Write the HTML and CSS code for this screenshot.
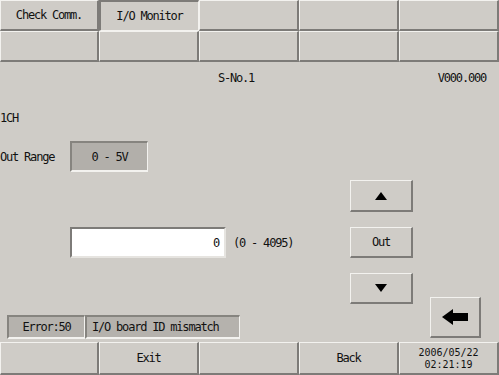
FILE: index.html
```html
<!DOCTYPE html>
<html>
<head>
<meta charset="utf-8">
<link rel="stylesheet" href="styles.css">
</head>
<body>
<div class="screen">
  <div class="nav">
    <div class="btn">Check Comm.</div>
    <div class="btn sel">I/O Monitor</div>
    <div class="btn"></div>
    <div class="btn"></div>
    <div class="btn"></div>
    <div class="btn"></div>
    <div class="btn"></div>
    <div class="btn"></div>
    <div class="btn"></div>
    <div class="btn"></div>
  </div>
  <div class="main">
    <div class="hdr">
      <span class="sno">S-No.1</span>
      <span class="ver">V000.000</span>
    </div>
    <div class="ch">1CH</div>
    <div class="range">
      <span class="lbl">Out Range</span>
      <span class="rbox">0 - 5V</span>
    </div>
    <div class="lower">
      <div class="btn up"><svg width="12" height="8" viewBox="0 0 12 8"><polygon points="6,0 12,8 0,8" fill="#000"/></svg></div>
      <div class="input">0</div>
      <div class="hint">(0 - 4095)</div>
      <div class="btn out">Out</div>
      <div class="btn down"><svg width="12" height="8" viewBox="0 0 12 8"><polygon points="0,0 12,0 6,8" fill="#000"/></svg></div>
      <div class="btn arrow"><svg width="26" height="16" viewBox="0 0 26 16"><polygon points="0,8 11,0 11,4 26,4 26,12 11,12 11,16" fill="#000"/></svg></div>
      <div class="errrow">
        <span class="err">Error:50</span>
        <span class="msg">I/O board ID mismatch</span>
      </div>
    </div>
  </div>
  <div class="foot">
    <div class="btn"></div>
    <div class="btn">Exit</div>
    <div class="btn"></div>
    <div class="btn">Back</div>
    <div class="btn date"><span>2006/05/22</span><span>02:21:19</span></div>
  </div>
</div>
</body>
</html>
```
FILE: styles.css
```css
html, body {
  margin: 0;
  padding: 0;
}
body {
  background: #cfccc7;
  font-family: "DejaVu Sans Mono", "Liberation Mono", monospace;
  font-size: 12px;
  letter-spacing: -1.2px;
  color: #111;
}
.screen {
  width: 499px;
  height: 375px;
  display: flex;
  flex-direction: column;
  overflow: hidden;
}
.btn {
  box-sizing: border-box;
  background: #cfccc7;
  border-top: 1px solid #f3f2ef;
  border-left: 1px solid #f3f2ef;
  border-right: 2px solid #7d7b78;
  border-bottom: 2px solid #7d7b78;
  display: flex;
  align-items: center;
  justify-content: center;
  white-space: nowrap;
}
.btn.sel {
  border-top: 2px solid #7d7b78;
  border-left: 2px solid #7d7b78;
  border-right: 1px solid #f3f2ef;
  border-bottom: 1px solid #f3f2ef;
}
.nav {
  display: grid;
  grid-template-columns: 99px 100px 100px 100px 100px;
  grid-template-rows: 31px 31px;
}
.main {
  height: 280px;
  display: flex;
  flex-direction: column;
}
.hdr {
  height: 32px;
  display: flex;
  align-items: center;
}
.sno {
  margin-left: 218px;
}
.ver {
  margin-left: auto;
  margin-right: 13px;
}
.ch {
  height: 47px;
  display: flex;
  align-items: center;
}
.range {
  height: 31px;
  display: flex;
  align-items: center;
}
.lbl {
  width: 70px;
}
.rbox {
  box-sizing: border-box;
  width: 78px;
  height: 31px;
  background: #b2afaa;
  border-top: 2px solid #86847f;
  border-left: 2px solid #86847f;
  border-right: 1px solid #f3f2ef;
  border-bottom: 2px solid #f3f2ef;
  display: flex;
  align-items: center;
  justify-content: center;
}
.lower {
  height: 170px;
  display: grid;
  grid-template-columns: 70px 156px 124px 63px 17px 51px 18px;
  grid-template-rows: 8px 32px 15px 31px 15px 24px 7px 11px 24px 3px;
}
.up {
  grid-column: 4;
  grid-row: 2 / 3;
}
.input {
  grid-column: 2;
  grid-row: 4 / 5;
  box-sizing: border-box;
  background: #fff;
  border-top: 2px solid #7d7b78;
  border-left: 2px solid #7d7b78;
  border-right: 2px solid #e6e4e0;
  border-bottom: 2px solid #e6e4e0;
  display: flex;
  align-items: center;
  justify-content: flex-end;
  padding-right: 5px;
}
.hint {
  grid-column: 3;
  grid-row: 4 / 5;
  display: flex;
  align-items: center;
  padding-left: 7px;
}
.out {
  grid-column: 4;
  grid-row: 4 / 5;
}
.down {
  grid-column: 4;
  grid-row: 6 / 8;
}
.arrow {
  grid-column: 6;
  grid-row: 7 / 10;
  height: 41px;
}
.errrow {
  grid-column: 1 / 4;
  grid-row: 9 / 10;
  display: flex;
  padding-left: 7px;
}
.err, .msg {
  box-sizing: border-box;
  height: 24px;
  background: #b5b2ad;
  border-top: 2px solid #86847f;
  border-left: 2px solid #86847f;
  border-right: 1px solid #f3f2ef;
  border-bottom: 2px solid #f3f2ef;
  display: flex;
  align-items: center;
}
.err {
  width: 78px;
  justify-content: center;
}
.msg {
  width: 155px;
  padding-left: 5px;
}
.foot {
  display: grid;
  grid-template-columns: 99px 100px 100px 100px 100px;
  height: 33px;
}
.date {
  flex-direction: column;
  font-size: 10px;
  letter-spacing: 0;
  line-height: 12px;
  padding-top: 1px;
}
```
